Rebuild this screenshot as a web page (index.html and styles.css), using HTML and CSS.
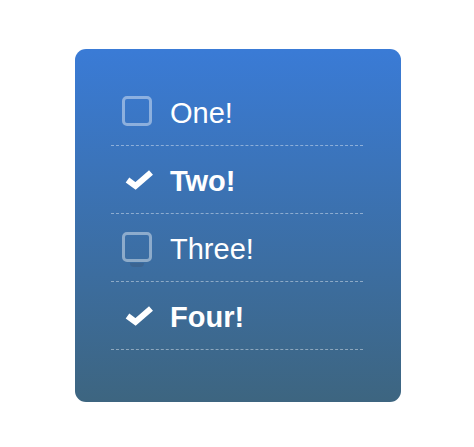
FILE: index.html
```
<!DOCTYPE html>
<html>
<head>
<meta charset="utf-8">
<link rel="stylesheet" href="styles.css">
</head>
<body>
<div class="card">
  <ul class="list">
    <li class="item">
      <span class="box"></span>
      <span class="label">One!</span>
    </li>
    <li class="item done">
      <span class="mark"><svg width="29" height="21" viewBox="0 0 29 21"><polyline points="2.5,11 10.5,17 26,3.5" fill="none" stroke="#fff" stroke-width="6" stroke-linejoin="miter" stroke-linecap="butt"/></svg></span>
      <span class="label">Two!</span>
    </li>
    <li class="item">
      <span class="box focused"></span>
      <span class="label">Three!</span>
    </li>
    <li class="item done">
      <span class="mark"><svg width="29" height="21" viewBox="0 0 29 21"><polyline points="2.5,11 10.5,17 26,3.5" fill="none" stroke="#fff" stroke-width="6" stroke-linejoin="miter" stroke-linecap="butt"/></svg></span>
      <span class="label">Four!</span>
    </li>
  </ul>
</div>
</body>
</html>
```
FILE: styles.css
```
html, body {
  margin: 0;
  padding: 0;
  background: #fff;
}
body {
  padding: 49px 0 0 75px;
  font-family: "Liberation Sans", Arial, Helvetica, sans-serif;
}
.card {
  width: 326px;
  height: 353px;
  box-sizing: border-box;
  padding: 29px 38px 0 36px;
  border-radius: 11px;
  background: linear-gradient(#3a7bd6, #3d6580);
}
.list {
  list-style: none;
  margin: 0;
  padding: 0;
}
.item {
  height: 67px;
  border-bottom: 1px dashed rgba(255, 255, 255, 0.42);
  display: flex;
  align-items: center;
  padding-left: 11px;
  color: #fff;
}
.box, .mark {
  width: 30px;
  height: 30px;
  flex: none;
  box-sizing: border-box;
  position: relative;
}
.box {
  border: 3px solid rgba(255, 255, 255, 0.42);
  border-radius: 5px;
  margin-top: -1px;
}
.box.focused::after {
  content: "";
  position: absolute;
  left: 5px;
  top: 28px;
  width: 14px;
  height: 4px;
  border-radius: 0 0 7px 7px;
  background: rgba(60, 80, 110, 0.3);
}
.mark {
  display: flex;
  align-items: center;
  justify-content: flex-start;
  padding-left: 3px;
}
.mark svg {
  display: block;
  flex: none;
}
.label {
  margin-left: 18px;
  font-size: 29px;
  line-height: 34px;
  padding-top: 3px;
}
.done .label {
  font-weight: bold;
}
```
